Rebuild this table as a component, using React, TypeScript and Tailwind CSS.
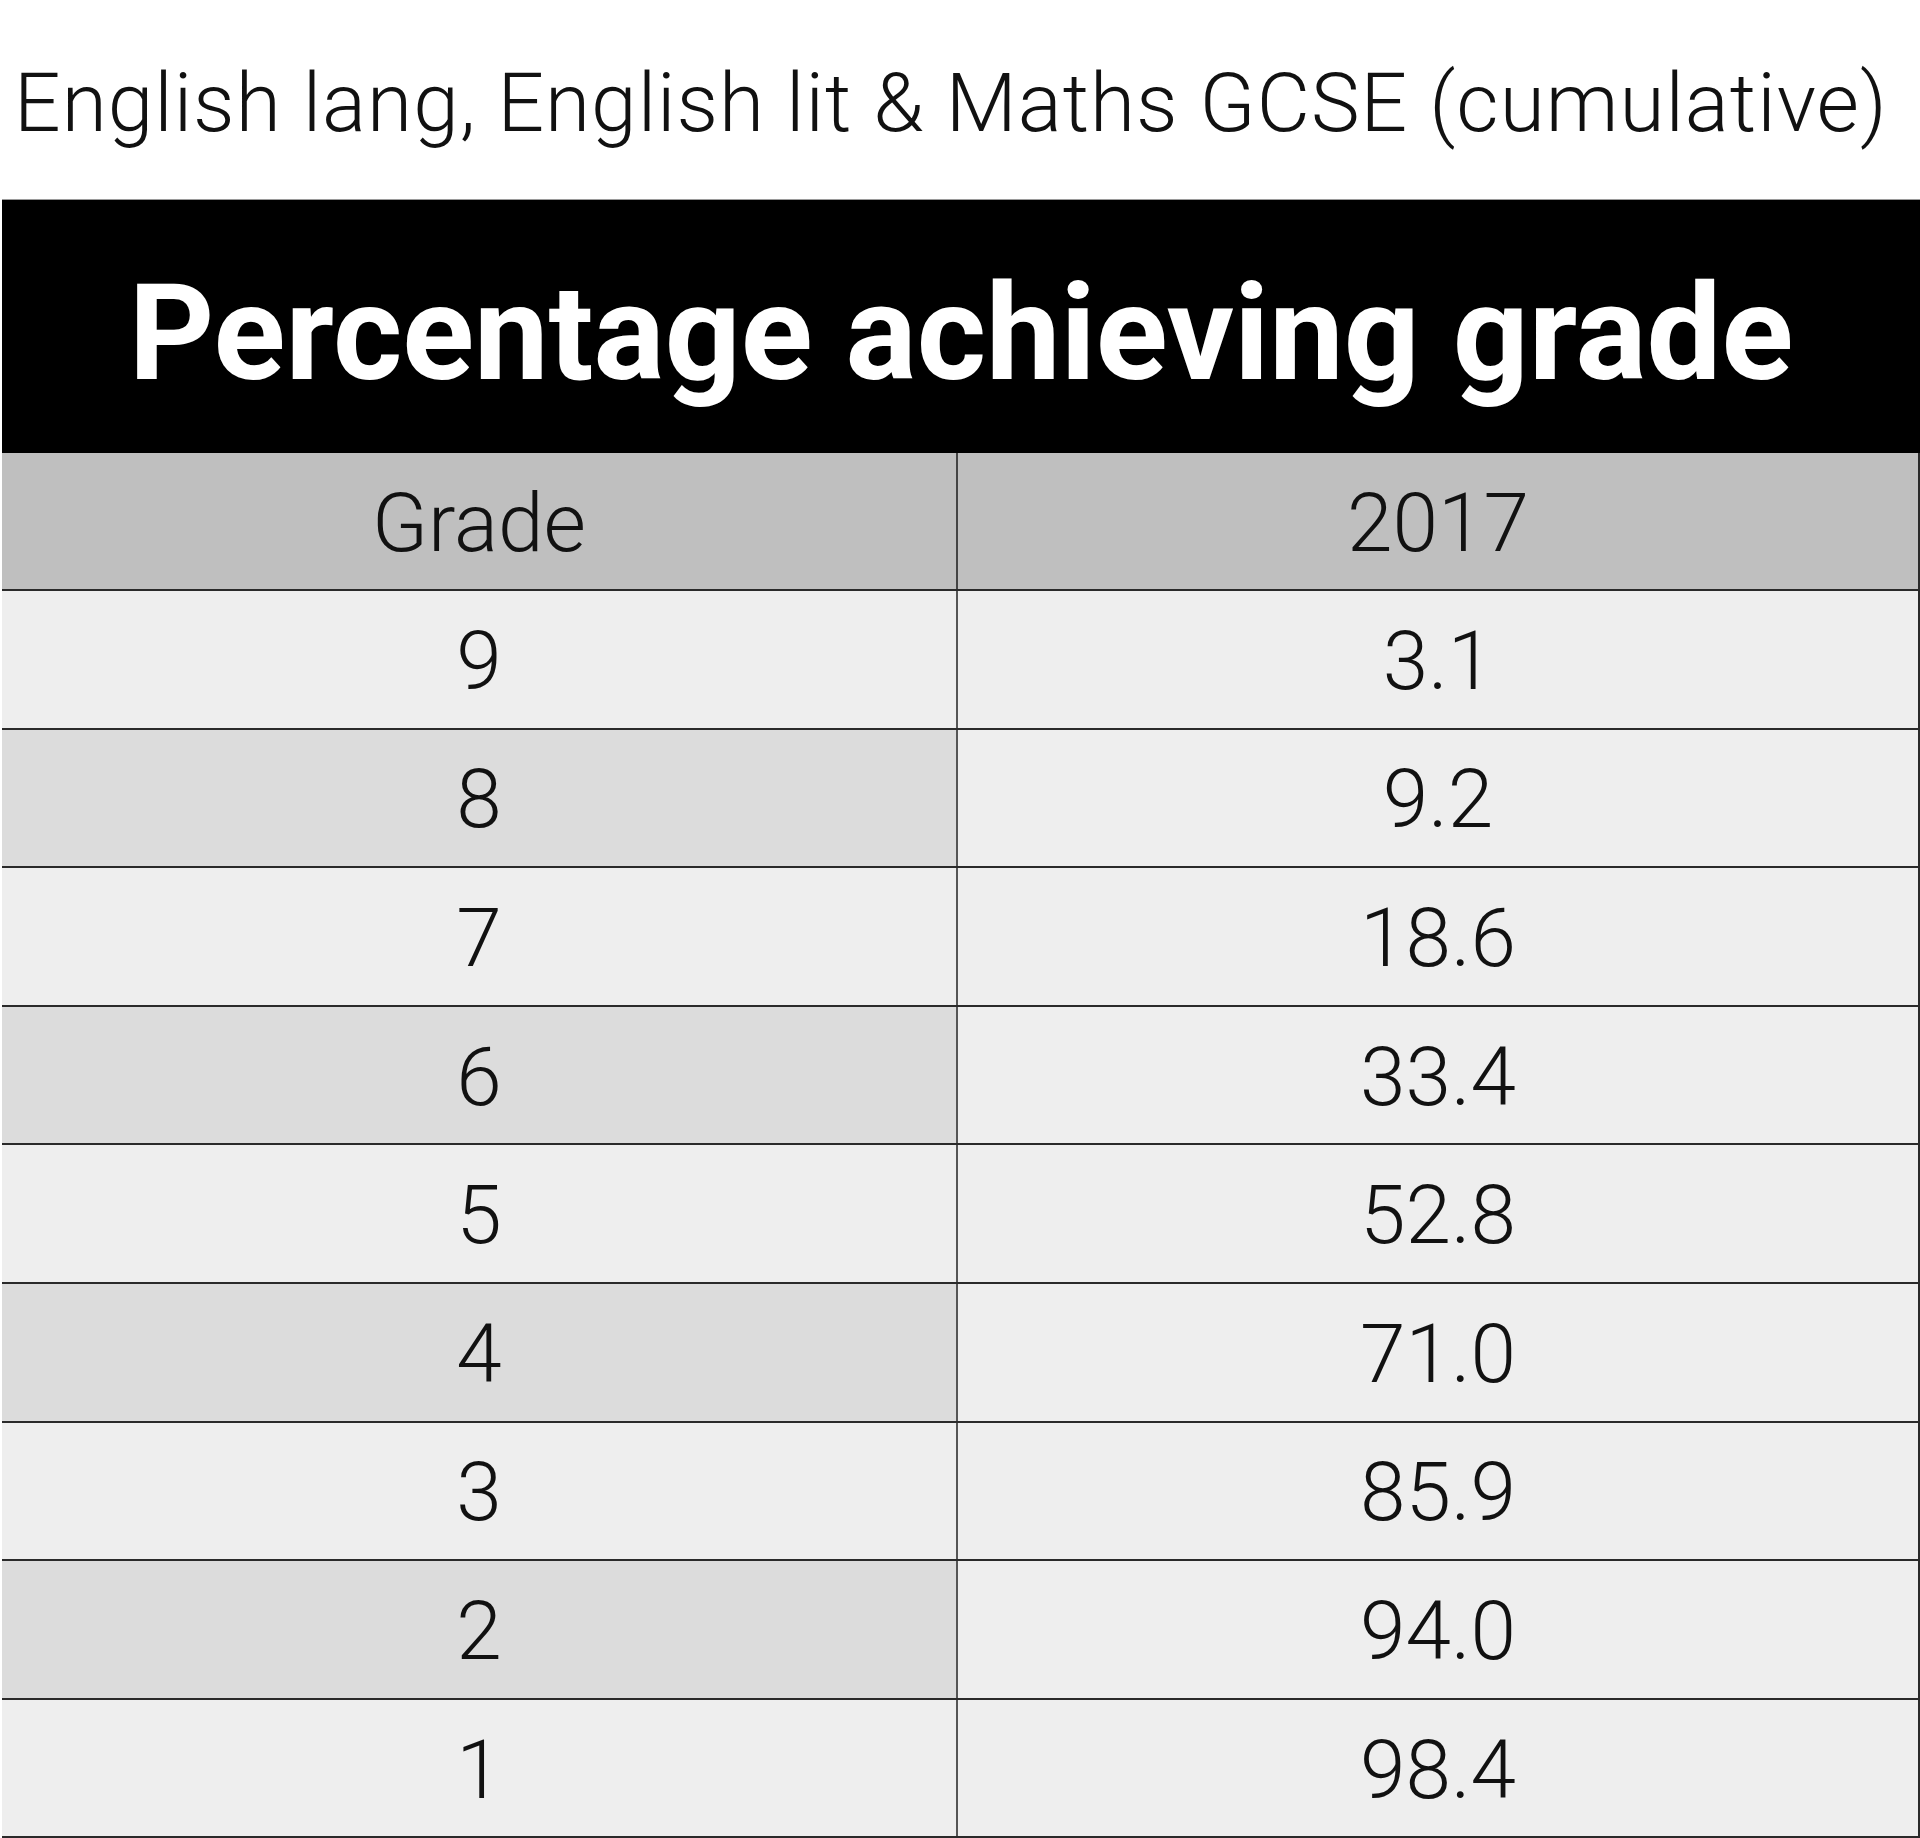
const rows: { grade: string; value: string }[] = [
  { grade: '9', value: '3.1' },
  { grade: '8', value: '9.2' },
  { grade: '7', value: '18.6' },
  { grade: '6', value: '33.4' },
  { grade: '5', value: '52.8' },
  { grade: '4', value: '71.0' },
  { grade: '3', value: '85.9' },
  { grade: '2', value: '94.0' },
  { grade: '1', value: '98.4' },
];

export default function App() {
  return (
    <div
      className="h-[1838px] w-[1920px] overflow-hidden bg-white text-[#111]"
      style={{ fontFamily: 'Roboto, "Liberation Sans", sans-serif' }}
    >
      <div className="flex h-[199px] items-start pl-[14px] pt-[62px]">
        <h1 className="text-[82px] font-light leading-none tracking-[1px]">
          English lang, English lit &amp; Maths GCSE (cumulative)
        </h1>
      </div>

      <div className="ml-[2px] border-t border-[#9a9a9a]">
        <div className="flex h-[253px] items-center justify-center bg-black pt-[14px]">
          <h2 className="text-[133px] font-bold leading-none text-white">
            Percentage achieving grade
          </h2>
        </div>

        <div className="flex h-[138px] border-b-2 border-r-2 border-[#2a2a2a] bg-[#bfbfbf] font-light">
          <div className="flex w-[956px] items-center justify-center border-r-2 border-[#444] pt-[3px] text-[82px] leading-none">
            Grade
          </div>
          <div className="flex flex-1 items-center justify-center pt-[3px] text-[82px] leading-none">
            2017
          </div>
        </div>

        {rows.map((r, i) => (
          <div
            key={r.grade}
            className="flex h-[138.6px] border-b-2 border-r-2 border-[#2a2a2a] bg-[#eeeeee] font-light"
          >
            <div
              className={
                'flex w-[956px] items-center justify-center border-r-2 border-[#555] pt-[3px] text-[82px] leading-none ' +
                (i % 2 === 1 ? 'bg-[#dcdcdc]' : 'bg-[#eeeeee]')
              }
            >
              {r.grade}
            </div>
            <div className="flex flex-1 items-center justify-center pt-[3px] text-[82px] leading-none">
              {r.value}
            </div>
          </div>
        ))}
      </div>
    </div>
  );
}
